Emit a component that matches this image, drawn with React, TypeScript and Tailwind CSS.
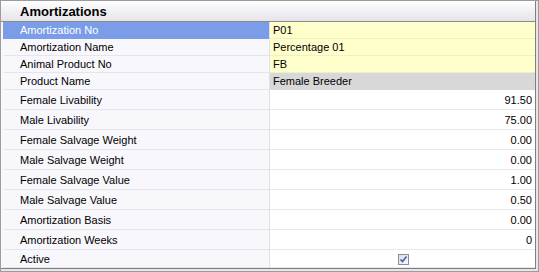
import React from "react";

type Row = { label: string; value: string; kind: "yellow" | "gray" | "white" | "check"; align?: "left" | "right"; h: number };

const rows: Row[] = [
  { label: "Amortization No", value: "P01", kind: "yellow", h: 17 },
  { label: "Amortization Name", value: "Percentage 01", kind: "yellow", h: 17 },
  { label: "Animal Product No", value: "FB", kind: "yellow", h: 17 },
  { label: "Product Name", value: "Female Breeder", kind: "gray", h: 17 },
  { label: "Female Livability", value: "91.50", kind: "white", align: "right", h: 20 },
  { label: "Male Livability", value: "75.00", kind: "white", align: "right", h: 20 },
  { label: "Female Salvage Weight", value: "0.00", kind: "white", align: "right", h: 20 },
  { label: "Male Salvage Weight", value: "0.00", kind: "white", align: "right", h: 20 },
  { label: "Female Salvage Value", value: "1.00", kind: "white", align: "right", h: 20 },
  { label: "Male Salvage Value", value: "0.50", kind: "white", align: "right", h: 20 },
  { label: "Amortization Basis", value: "0.00", kind: "white", align: "right", h: 20 },
  { label: "Amortization Weeks", value: "0", kind: "white", align: "right", h: 20 },
  { label: "Active", value: "", kind: "check", h: 18 },
];

export default function App() {
  return (
    <div
      className="w-[539px] h-[272px] border border-[#9c9c9c] bg-[#e6e6e6] pr-[2px] pb-[2px] overflow-hidden text-[11px] text-black"
      style={{ fontFamily: '"Liberation Sans", Arial, sans-serif' }}
    >
      <div className="w-full h-full border-r border-b border-[#7f7f7f] bg-[#f8f7fc] flex flex-col overflow-hidden">
        <div className="h-[21px] shrink-0 bg-gradient-to-b from-white to-[#e4e4ea] flex items-center pl-[19px] pt-[1px] font-bold text-[13px] border-b border-[#8a8a8a]">
          Amortizations
        </div>
        {rows.map((r, i) => (
          <div key={i} className="flex shrink-0" style={{ height: r.h }}>
            <div
              className={
                "w-[266px] shrink-0 ml-[2px] flex items-center pl-[17px] pt-[1px] border-b " +
                (i === 0 ? "bg-[#7b9de7] text-white border-[#7b9de7]" : "bg-[#f8f7fc] border-[#e6e4ec]")
              }
            >
              {r.label}
            </div>
            <div className="w-px shrink-0 bg-[#e0dee6]" />
            <div
              className={
                "flex-1 flex items-center border-b px-[3px] pt-[1px] " +
                (r.kind === "yellow"
                  ? "bg-[#ffffcc] border-[#f0f0c8]"
                  : r.kind === "gray"
                  ? "bg-[#d8d8d8] border-[#d8d8d8]"
                  : "bg-white border-[#e8e8ec]") +
                (r.align === "right" ? " justify-end" : r.kind === "check" ? " justify-center" : " justify-start")
              }
            >
              {r.kind === "check" ? (
                <div className="w-[11px] h-[11px] border border-[#8a8e9c] bg-gradient-to-br from-[#dcdce4] to-[#f6f6fa] flex items-center justify-center ml-[2px]">
                  <svg width="9" height="9" viewBox="0 0 9 9">
                    <path d="M1.5 4.5 L3.5 6.5 L7.5 1.5" stroke="#4a5fa8" strokeWidth="1.6" fill="none" />
                  </svg>
                </div>
              ) : (
                r.value
              )}
            </div>
          </div>
        ))}
      </div>
    </div>
  );
}
